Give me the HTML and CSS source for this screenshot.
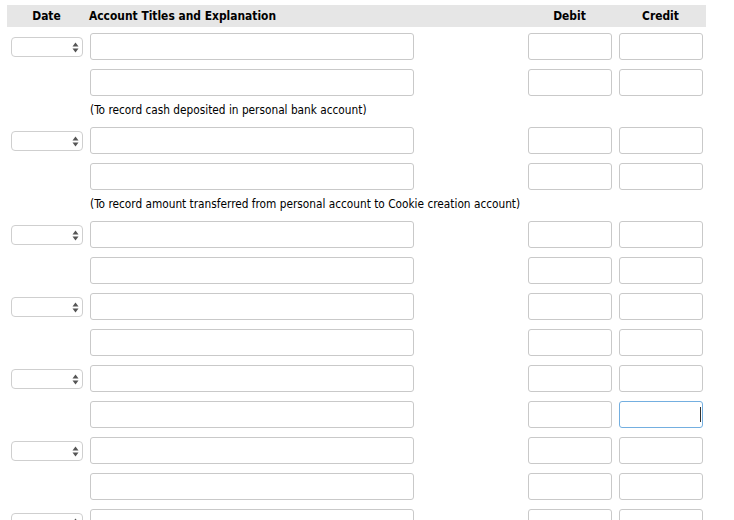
FILE: index.html
```html
<!DOCTYPE html>
<html>
<head>
<meta charset="utf-8">
<link rel="stylesheet" href="styles.css">
</head>
<body>
<div class="journal">
  <div class="head">
    <div class="h-date">Date</div>
    <div class="h-acct">Account Titles and Explanation</div>
    <div class="h-num">Debit</div>
    <div class="h-num">Credit</div>
  </div>

  <div class="row">
    <div class="c-date"><div class="sel"><svg width="7" height="11" viewBox="0 0 7 11"><path d="M3.5 0.5 L6.5 4.5 L0.5 4.5 Z M3.5 10.5 L6.5 6.5 L0.5 6.5 Z" fill="#555"/></svg></div></div>
    <div class="c-acct"><input class="acct" type="text"></div>
    <div class="c-num"><input class="num" type="text"></div>
    <div class="c-num"><input class="num" type="text"></div>
  </div>
  <div class="row">
    <div class="c-date"></div>
    <div class="c-acct"><input class="acct" type="text"></div>
    <div class="c-num"><input class="num" type="text"></div>
    <div class="c-num"><input class="num" type="text"></div>
  </div>
  <div class="expl">(To record cash deposited in personal bank account)</div>

  <div class="row">
    <div class="c-date"><div class="sel"><svg width="7" height="11" viewBox="0 0 7 11"><path d="M3.5 0.5 L6.5 4.5 L0.5 4.5 Z M3.5 10.5 L6.5 6.5 L0.5 6.5 Z" fill="#555"/></svg></div></div>
    <div class="c-acct"><input class="acct" type="text"></div>
    <div class="c-num"><input class="num" type="text"></div>
    <div class="c-num"><input class="num" type="text"></div>
  </div>
  <div class="row">
    <div class="c-date"></div>
    <div class="c-acct"><input class="acct" type="text"></div>
    <div class="c-num"><input class="num" type="text"></div>
    <div class="c-num"><input class="num" type="text"></div>
  </div>
  <div class="expl">(To record amount transferred from personal account to Cookie creation account)</div>

  <div class="row">
    <div class="c-date"><div class="sel"><svg width="7" height="11" viewBox="0 0 7 11"><path d="M3.5 0.5 L6.5 4.5 L0.5 4.5 Z M3.5 10.5 L6.5 6.5 L0.5 6.5 Z" fill="#555"/></svg></div></div>
    <div class="c-acct"><input class="acct" type="text"></div>
    <div class="c-num"><input class="num" type="text"></div>
    <div class="c-num"><input class="num" type="text"></div>
  </div>
  <div class="row">
    <div class="c-date"></div>
    <div class="c-acct"><input class="acct" type="text"></div>
    <div class="c-num"><input class="num" type="text"></div>
    <div class="c-num"><input class="num" type="text"></div>
  </div>

  <div class="row">
    <div class="c-date"><div class="sel"><svg width="7" height="11" viewBox="0 0 7 11"><path d="M3.5 0.5 L6.5 4.5 L0.5 4.5 Z M3.5 10.5 L6.5 6.5 L0.5 6.5 Z" fill="#555"/></svg></div></div>
    <div class="c-acct"><input class="acct" type="text"></div>
    <div class="c-num"><input class="num" type="text"></div>
    <div class="c-num"><input class="num" type="text"></div>
  </div>
  <div class="row">
    <div class="c-date"></div>
    <div class="c-acct"><input class="acct" type="text"></div>
    <div class="c-num"><input class="num" type="text"></div>
    <div class="c-num"><input class="num" type="text"></div>
  </div>

  <div class="row">
    <div class="c-date"><div class="sel"><svg width="7" height="11" viewBox="0 0 7 11"><path d="M3.5 0.5 L6.5 4.5 L0.5 4.5 Z M3.5 10.5 L6.5 6.5 L0.5 6.5 Z" fill="#555"/></svg></div></div>
    <div class="c-acct"><input class="acct" type="text"></div>
    <div class="c-num"><input class="num" type="text"></div>
    <div class="c-num"><input class="num" type="text"></div>
  </div>
  <div class="row">
    <div class="c-date"></div>
    <div class="c-acct"><input class="acct" type="text"></div>
    <div class="c-num"><input class="num" type="text"></div>
    <div class="c-num"><span class="focus-wrap"><input class="num focused" type="text"><span class="caret"></span></span></div>
  </div>

  <div class="row">
    <div class="c-date"><div class="sel"><svg width="7" height="11" viewBox="0 0 7 11"><path d="M3.5 0.5 L6.5 4.5 L0.5 4.5 Z M3.5 10.5 L6.5 6.5 L0.5 6.5 Z" fill="#555"/></svg></div></div>
    <div class="c-acct"><input class="acct" type="text"></div>
    <div class="c-num"><input class="num" type="text"></div>
    <div class="c-num"><input class="num" type="text"></div>
  </div>
  <div class="row">
    <div class="c-date"></div>
    <div class="c-acct"><input class="acct" type="text"></div>
    <div class="c-num"><input class="num" type="text"></div>
    <div class="c-num"><input class="num" type="text"></div>
  </div>

  <div class="row">
    <div class="c-date"><div class="sel"><svg width="7" height="11" viewBox="0 0 7 11"><path d="M3.5 0.5 L6.5 4.5 L0.5 4.5 Z M3.5 10.5 L6.5 6.5 L0.5 6.5 Z" fill="#555"/></svg></div></div>
    <div class="c-acct"><input class="acct" type="text"></div>
    <div class="c-num"><input class="num" type="text"></div>
    <div class="c-num"><input class="num" type="text"></div>
  </div>
</div>
</body>
</html>
```
FILE: styles.css
```css
html, body {
  margin: 0;
  padding: 0;
  background: #ffffff;
  overflow: hidden;
}
body {
  font-family: "DejaVu Sans Condensed", "DejaVu Sans", sans-serif;
  font-size: 12px;
  color: #000;
}
.journal {
  margin: 5px 0 0 7px;
  width: 699px;
  display: flex;
  flex-direction: column;
  gap: 9px;
}
.head {
  display: grid;
  grid-template-columns: 79px 438px 91px 91px;
  height: 22px;
  line-height: 22px;
  background: #e6e6e6;
  font-weight: bold;
  font-size: 11.9px;
  margin-bottom: -3px;
}
.h-date { text-align: center; }
.h-acct { padding-left: 3px; }
.h-num { text-align: center; }
.row {
  display: grid;
  grid-template-columns: 79px 438px 91px 91px;
  height: 27px;
  align-items: center;
}
.c-date { padding-left: 4px; display: flex; }
.c-acct { padding-left: 4px; display: flex; }
.c-num { padding-left: 4px; display: flex; }
input {
  box-sizing: border-box;
  height: 27px;
  margin: 0;
  padding: 0 4px;
  border: 1px solid #c9c9c9;
  border-radius: 3px;
  background: #fff;
  font: inherit;
  outline: none;
}
.acct { width: 324px; }
.num { width: 84px; }
.focused { border-color: #74afe0; }
.focus-wrap { position: relative; display: block; width: 84px; height: 27px; }
.caret {
  position: absolute;
  right: 2px;
  top: 6px;
  width: 1px;
  height: 15px;
  background: #333;
}
.sel {
  box-sizing: border-box;
  width: 72px;
  height: 20px;
  border: 1px solid #cfcfcf;
  border-radius: 4px;
  background: #fff;
  display: flex;
  align-items: center;
  justify-content: flex-end;
  padding-right: 3px;
  margin-top: 1px;
}
.sel svg { display: block; }
.expl {
  margin-top: -2px;
  line-height: 15px;
  height: 15px;
  padding-left: 83px;
  font-size: 11.75px;
  white-space: nowrap;
}
```
